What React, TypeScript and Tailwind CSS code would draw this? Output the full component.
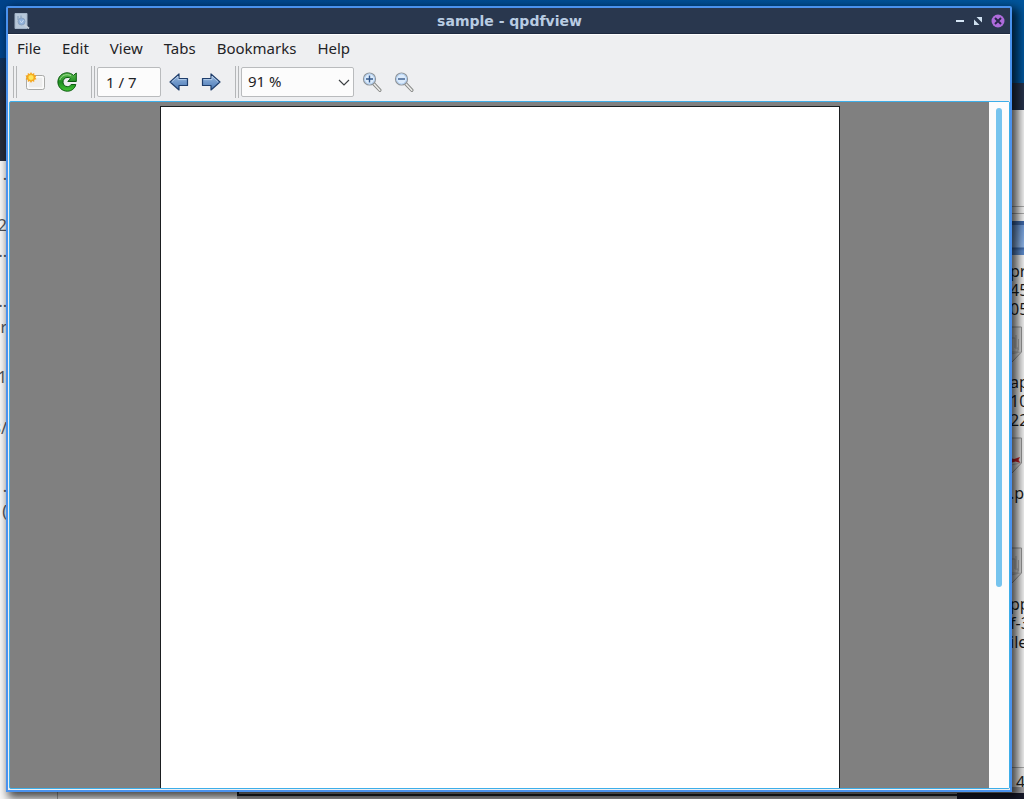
import { useState } from "react";
import type { ReactNode } from "react";

const menus = ["File", "Edit", "View", "Tabs", "Bookmarks", "Help"];

// lines of the text editor that stick out on the left
const leftLines = [
  { top: 164, text: "." },
  { top: 215, text: "2" },
  { top: 241, text: ".." },
  { top: 291, text: ".." },
  { top: 317, text: "ar" },
  { top: 367, text: "/1" },
  { top: 418, text: "3/" },
  { top: 476, text: "." },
  { top: 501, text: "(" },
];

// file names of the file manager that stick out on the right
const fileNames = [
  { top: 262, lines: ["pr", "45", "05"] },
  { top: 373, lines: ["ap", "10", "22"] },
  { top: 484, lines: [".p"] },
  { top: 595, lines: ["pp", "f-3", "ile"] },
];

function FilePage({ top, pdf }: { top: number; pdf?: boolean }) {
  return (
    <svg width="12" height="38" viewBox="0 0 12 38" className="absolute left-0" style={{ top }}>
      <path d="M-2 1h13.500v25L1 37h-3z" fill="#e4e4e4" stroke="#999" />
      {pdf ? (
        <path d="M0 21l4 1 6-2-1.500 3 2 3-5-1.500L0 26z" fill="#c8202a" />
      ) : (
        <path d="M1 12h4v10h3v4H1M6 9v12M8.500 13v11" fill="none" stroke="#b4b4b4" />
      )}
      <path d="M11 26L1 28v9" fill="none" stroke="#b5b5b5" strokeWidth="0.800" />
    </svg>
  );
}

function Desktop() {
  return (
    <div aria-hidden="true" className="absolute inset-0 overflow-hidden bg-[linear-gradient(90deg,#00438a,#00559c)]">
      {/* Left window */}
      <div className="absolute top-[58px] bottom-0 left-0 w-60 bg-[#f8f8f8]">
        <div className="h-[103px] bg-[linear-gradient(#0d3160,#262c3c_45px)]" />
        <span className="absolute bottom-0 left-[57px] h-2 w-px bg-[#b0b0b0]" />
      </div>
      {leftLines.map((l) => (
        <span
          key={l.top}
          className="absolute left-0 flex w-[7px] justify-end text-base leading-5 text-[#50545a]"
          style={{ top: l.top }}
        >
          {l.text}
        </span>
      ))}

      {/* Right window */}
      <div className="absolute inset-y-0 right-0 w-3.5">
        <div className="absolute inset-x-0 top-[83px] h-7 bg-[#26324a]" />
        <div className="absolute inset-x-0 top-[110px] bottom-0 bg-[#f4f4f4]" />
        <div className="absolute inset-x-0 top-[206px] h-2 border-y border-[#aaa]" />
        <div className="absolute inset-x-0 top-[221px] h-[34px] border-t-4 border-[#3e67a6] bg-[linear-gradient(#6f9ad6,#8fb5e8_22px,#3e67a6_23px,#5c8aca_26px)]" />
        {fileNames.map((f) => (
          <div
            key={f.top}
            className="absolute left-0 text-base leading-[19px] whitespace-nowrap text-[#1c1c1c]"
            style={{ top: f.top }}
          >
            {f.lines.map((t) => (
              <div key={t}>{t}</div>
            ))}
          </div>
        ))}
        <FilePage top={326} />
        <FilePage top={437} pdf />
        <FilePage top={547} />
        <div className="absolute inset-x-0 top-[767px] bottom-0 border-t border-[#a8a8a8] bg-[#ececec] pl-1.5 text-base leading-[28px] text-[#222]">
          4
        </div>
      </div>

      {/* Bottom window */}
      <div className="absolute right-0 bottom-0 left-[237px] h-3 bg-[#a5a5a8]">
        <div className="h-[7px] border-l-2 border-[#20232a]" />
        <div className="h-0.5 w-[720px] bg-[#20232a]" />
        <div className="absolute right-0 bottom-0 h-1.5 w-[67px] bg-[#17192a]" />
      </div>
    </div>
  );
}

function AppIcon() {
  return (
    <svg width="16" height="16" viewBox="0 0 16 16">
      <path d="M1 .5h12v15H1z" fill="#b7c8da" stroke="#a3b4c8" />
      <path d="M4 3v4M7 2.500v4" fill="none" stroke="#8ea7c2" strokeWidth="1.300" />
      <circle cx="7.500" cy="8.500" r="3.500" fill="#8fb0da" stroke="#8ba3c0" />
      <path d="M6 7.500l1.500 2.500 2-3" fill="none" stroke="#c8daee" />
      <path d="M10.500 12l4.500 3.500" stroke="#c6cfda" strokeWidth="1.800" />
    </svg>
  );
}

function NewTabIcon() {
  return (
    <svg width="20" height="20" viewBox="0 0 20 20">
      <rect x="1.500" y="3.500" width="18" height="14" rx="2" fill="#f7f7f7" stroke="#a9aaa8" />
      <rect x="3" y="5" width="15" height="11" rx="1" fill="#ededed" stroke="#fff" />
      <path
        d="M6 0l1.200 2 2-1 .1 2.200 2.200.4-1.200 1.900 1.200 1.800-2.200.4-.1 2.200-2-1L6 11 4.800 9l-2 .9-.1-2.200-2.200-.4 1.200-1.800L.5 3.600l2.200-.4L2.800 1l2 1z"
        fill="#f7a51b"
      />
      <circle cx="6" cy="5.500" r="2.800" fill="#ffe65c" stroke="#f0b323" strokeWidth="0.600" />
    </svg>
  );
}

function RefreshIcon() {
  return (
    <svg width="20" height="20" viewBox="0 0 20 20">
      <defs>
        <linearGradient id="green" x1="0" y1="0" x2="0" y2="1">
          <stop offset="0" stopColor="#5fbf50" />
          <stop offset="0.500" stopColor="#1f8d22" />
          <stop offset="1" stopColor="#43c534" />
        </linearGradient>
      </defs>
      <path
        d="M19.300 1v8.500h-8.500l2.700-2.900C12.600 5.700 11.400 5.300 10 5.500 7.500 5.800 5.900 7.800 6 10.200c.1 2.600 2 4.400 4.400 4.400 1.700 0 3-.8 3.700-2.100h4.700c-.9 4-4.300 6.700-8.400 6.700-5.300 0-9.500-4-9.500-9.200C.9 4.900 4.900.9 10 .8c2.500 0 4.700.9 6.400 2.600z"
        fill="url(#green)"
        stroke="#0b5a10"
        strokeWidth="1"
        strokeLinejoin="round"
      />
      <path d="M2.800 8C4 3.800 9.500 1 14 3.800" fill="none" stroke="#a3df99" strokeWidth="0.900" />
    </svg>
  );
}

function ArrowIcon({ right }: { right?: boolean }) {
  return (
    <svg width="20" height="20" viewBox="0 0 20 20" className={right ? "-scale-x-100" : ""}>
      <defs>
        <linearGradient id="blue" x1="0" y1="0" x2="0" y2="1">
          <stop offset="0" stopColor="#9bbbe0" />
          <stop offset="1" stopColor="#4877b5" />
        </linearGradient>
      </defs>
      <path
        d="M1 10L10 2v4.500h8.500v7H10V18z"
        fill="url(#blue)"
        stroke="#1f3e6c"
        strokeWidth="1.200"
        strokeLinejoin="round"
      />
      <path d="M2.800 9.700L9 4.300v3.300h8.400" fill="none" stroke="#bfd4ee" strokeWidth="0.800" />
    </svg>
  );
}

function ZoomIcon({ plus }: { plus?: boolean }) {
  return (
    <svg width="20" height="20" viewBox="0 0 20 20">
      <path d="M11.500 11.500l6.300 6.700" stroke="#868886" strokeWidth="3.400" strokeLinecap="round" />
      <path d="M12 12l5.800 6.200" stroke="#ececea" strokeWidth="1.600" strokeLinecap="round" />
      <circle cx="7.500" cy="7" r="6" fill="#dcebfb" stroke="#8e9499" strokeWidth="1.200" />
      <circle cx="7.500" cy="7" r="5" fill="none" stroke="#a9cbf1" strokeWidth="0.900" />
      <path d={plus ? "M4 7h7M7.500 3.500v7" : "M4 7h7"} stroke="#35598b" strokeWidth="1.400" />
    </svg>
  );
}

function ToolButton({ label, children }: { label: string; children: ReactNode }) {
  return (
    <button type="button" aria-label={label} className="flex h-8 w-8 items-center justify-center">
      {children}
    </button>
  );
}

function ToolGroup({ children }: { children: ReactNode }) {
  return (
    <div className="flex items-center">
      <span className="mr-0.5 h-8 w-1 border-x border-[#b4b6b8]" />
      {children}
    </div>
  );
}

export default function App() {
  const [page, setPage] = useState("1 / 7");
  const [zoom, setZoom] = useState("91 %");

  return (
    <div className="relative h-screen overflow-hidden pt-1.5 pr-3 pb-[7px] pl-1.5 font-['Noto_Sans',sans-serif]">
      <Desktop />

      <main className="relative flex h-full flex-col rounded-t-xs border-2 border-[#4a92ee] bg-[#eeeff1] shadow-[4px_4px_10px_2px_rgba(0,0,0,0.7)]">
        {/* Title bar */}
        <header className="flex h-[26px] shrink-0 items-center border-b border-[#1e2a40] bg-[#29374e] pr-[5px] pl-1.5">
          <div className="flex w-14">
            <AppIcon />
          </div>
          <h1 className="flex-1 text-center font-['DejaVu_Sans',sans-serif] text-sm leading-5 font-bold text-[#b9cce2]">
            sample - qpdfview
          </h1>
          <div className="flex w-14 items-center justify-end gap-2">
            <button type="button" aria-label="Minimize">
              <svg width="10" height="12" viewBox="0 0 10 12">
                <path d="M1 6h8" stroke="#d5e6f5" strokeWidth="2" />
              </svg>
            </button>
            <button type="button" aria-label="Maximize">
              <svg width="10" height="12" viewBox="0 0 10 12">
                <path d="M3.500 2H9v5.500zM1 4.500V10h5.500z" fill="#cfe0f0" />
              </svg>
            </button>
            <button type="button" aria-label="Close">
              <svg width="14" height="14" viewBox="0 0 14 14">
                <circle cx="7" cy="7" r="6.500" fill="#ae6bdb" />
                <path d="M4 4l6 6M10 4l-6 6" stroke="#29274c" strokeWidth="2" />
              </svg>
            </button>
          </div>
        </header>

        {/* Menu bar */}
        <nav className="flex h-7 shrink-0 items-center gap-[21px] border-t border-white pl-[9px] text-[15px] text-[#1f2326]">
          {menus.map((m) => (
            <button key={m} type="button">
              {m}
            </button>
          ))}
        </nav>

        {/* Toolbar */}
        <div className="flex h-[39px] shrink-0 items-center gap-2 pl-[5px] text-[15px] text-[#1f2326]">
          <ToolGroup>
            <ToolButton label="Open in new tab">
              <NewTabIcon />
            </ToolButton>
            <ToolButton label="Refresh">
              <RefreshIcon />
            </ToolButton>
          </ToolGroup>
          <ToolGroup>
            <input
              aria-label="Page"
              value={page}
              onChange={(e) => setPage(e.target.value)}
              className="mr-0.5 h-[30px] w-16 rounded-xs border border-[#b9bbbd] bg-[#fcfcfc] px-2 outline-none"
            />
            <ToolButton label="Previous page">
              <ArrowIcon />
            </ToolButton>
            <ToolButton label="Next page">
              <ArrowIcon right />
            </ToolButton>
          </ToolGroup>
          <ToolGroup>
            <div className="relative mr-0.5">
              <select
                aria-label="Zoom"
                value={zoom}
                onChange={(e) => setZoom(e.target.value)}
                className="block h-[30px] w-[113px] appearance-none rounded-xs border border-[#b9bbbd] bg-[#fcfcfc] pl-1.5 outline-none"
              >
                <option>91 %</option>
                <option>100 %</option>
                <option>125 %</option>
              </select>
              <svg
                width="12"
                height="8"
                viewBox="0 0 12 8"
                className="pointer-events-none absolute top-3 right-1"
              >
                <path d="M1 1l5 5 5-5" fill="none" stroke="#3c4043" strokeWidth="1.200" />
              </svg>
            </div>
            <ToolButton label="Zoom in">
              <ZoomIcon plus />
            </ToolButton>
            <ToolButton label="Zoom out">
              <ZoomIcon />
            </ToolButton>
          </ToolGroup>
        </div>

        {/* Document */}
        <section className="mb-px ml-px flex min-h-0 flex-1 rounded-xs border border-[#3daee9] bg-[#808080]">
          <div className="flex flex-1 justify-center overflow-hidden pt-1">
            <div className="w-[680px] max-w-full border border-b-0 border-[#1b1e20] bg-white" />
          </div>
          <div className="flex w-5 justify-center bg-[#fcfcfc] py-1.5">
            <div className="h-[71%] w-1.5 rounded-full bg-[#76c4ee]" />
          </div>
        </section>
      </main>
    </div>
  );
}
